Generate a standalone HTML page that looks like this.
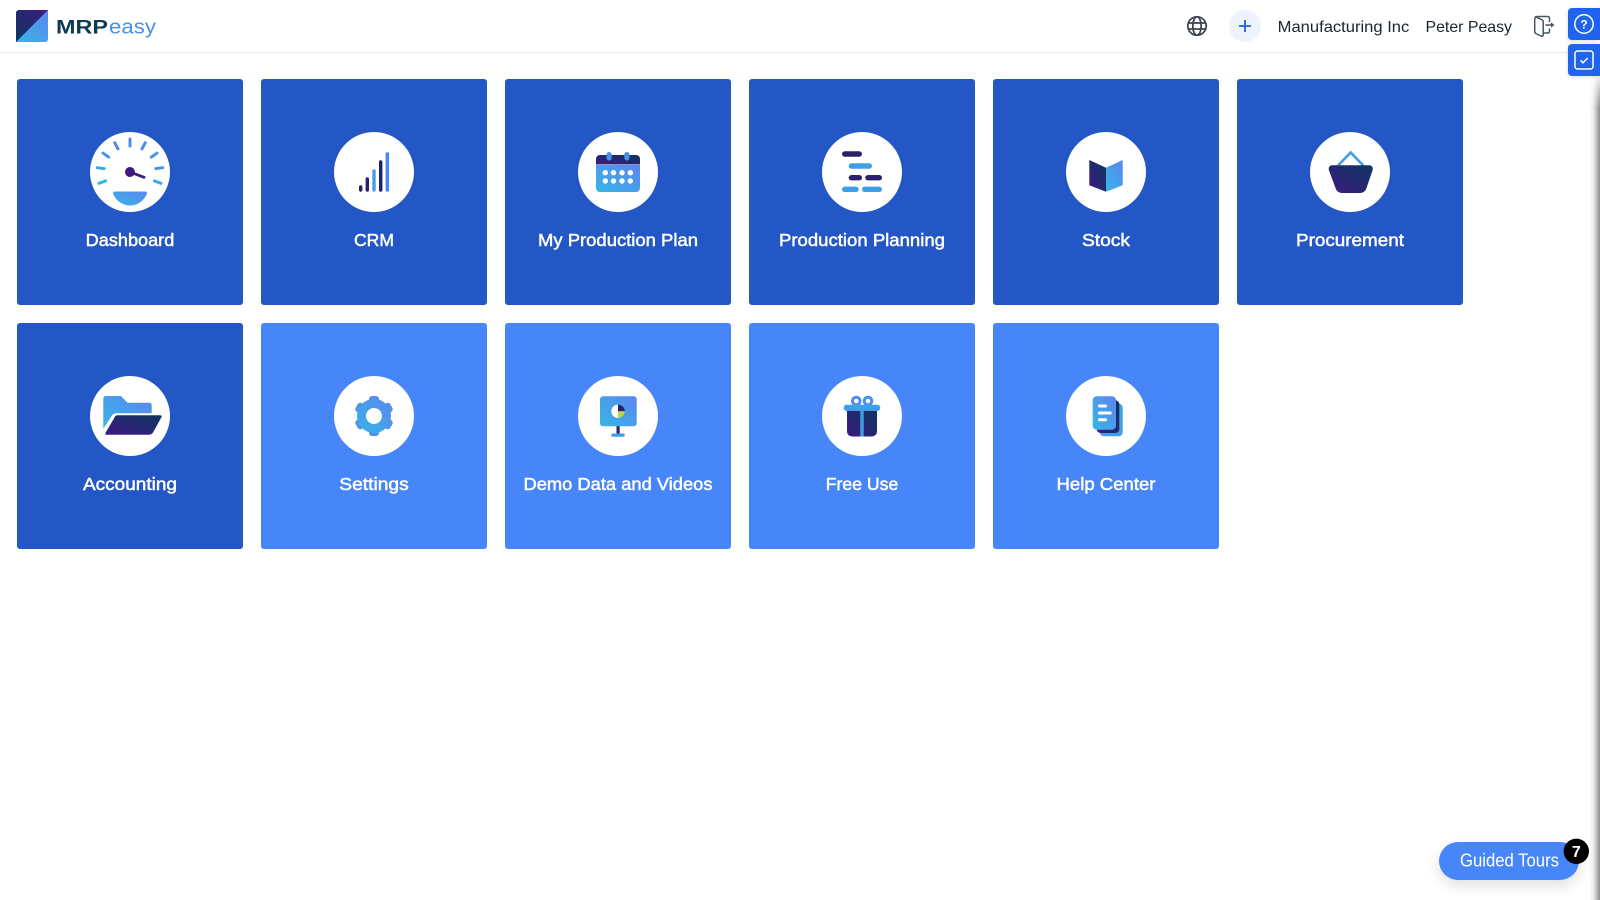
<!DOCTYPE html>
<html lang="en">
<head>
<meta charset="utf-8">
<title>MRPeasy</title>
<style>
html,body{margin:0;padding:0;width:1600px;height:900px;overflow:hidden;background:#fff;font-family:"Liberation Sans",sans-serif}
.hdr{position:absolute;left:0;top:0;width:1600px;height:52px;border-bottom:1px solid #e9e9f1;background:#fff}
.tile{position:absolute;width:226px;height:226px;border-radius:3px}
.d{background:#2257c5}
.l{background:#4686f8}
.tile svg{position:absolute;left:0;top:0;width:226px;height:226px}
.tile text{font-family:"Liberation Sans",sans-serif;font-size:17.5px;fill:#fff;stroke:#fff;stroke-width:.5px;text-anchor:middle}
.edge{position:absolute;left:1589px;top:72px;width:11px;height:828px;background:linear-gradient(to right,rgba(120,120,120,0),rgba(120,120,120,.14) 40%,rgba(110,110,110,.8));-webkit-mask-image:linear-gradient(to bottom,transparent,#000 36px);mask-image:linear-gradient(to bottom,transparent,#000 36px)}
.side{position:absolute;left:1568px;width:32px;height:32px;background:#1f63ee;border-radius:4px 0 0 4px;box-shadow:0 1px 4px rgba(0,0,0,.15)}
.pill{position:absolute;left:1439px;top:842px;width:140px;height:38px;border-radius:19px;background:#4686f8;box-shadow:0 6px 14px rgba(0,0,0,.12)}
.top,.over{position:absolute;left:0;top:0}
</style>
</head>
<body>
<svg width="0" height="0" style="position:absolute">
<defs>
<linearGradient id="g1" x1="0" y1="1" x2="1" y2="0"><stop offset="0" stop-color="#35b6e4"/><stop offset="1" stop-color="#5c85f1"/></linearGradient>
<linearGradient id="g2" x1="0" y1="1" x2="1" y2="0"><stop offset="0" stop-color="#3d1a80"/><stop offset="1" stop-color="#0d3660"/></linearGradient>
<linearGradient id="g3" gradientUnits="userSpaceOnUse" x1="24" y1="60" x2="56" y2="20"><stop offset="0" stop-color="#35b6e4"/><stop offset="1" stop-color="#5c85f1"/></linearGradient>
<linearGradient id="logoD" x1="0" y1="1" x2="1" y2="0"><stop offset="0" stop-color="#0d3660"/><stop offset="1" stop-color="#3d1a80"/></linearGradient>
</defs>
</svg>

<div class="hdr"></div>

<!-- Header -->
<svg class="top" width="1600" height="52" viewBox="0 0 1600 52">
  <path d="M16 13a3 3 0 0 1 3-3h29v29a3 3 0 0 1-3 3H16z" fill="url(#g1)"/>
  <path d="M16 42V13a3 3 0 0 1 3-3h29z" fill="url(#logoD)"/>
  <text x="56" y="33.3" font-family="Liberation Sans" font-weight="700" font-size="19" fill="#0e3a57" textLength="52" lengthAdjust="spacingAndGlyphs">MRP</text>
  <text x="109" y="33.3" font-family="Liberation Sans" font-size="20.5" fill="#4a90e8" textLength="47" lengthAdjust="spacingAndGlyphs">easy</text>

  <g fill="none" stroke="#3a4350" stroke-width="1.7">
    <circle cx="1197" cy="26" r="9.2"/>
    <ellipse cx="1197" cy="26" rx="4.2" ry="9.2"/>
    <path d="M1188.3 23h17.4M1188.3 29h17.4"/>
  </g>
  <circle cx="1245" cy="26" r="16" fill="#eef3fe"/>
  <path d="M1239 26h12M1245 20v12" stroke="#1f5fe0" stroke-width="1.8" fill="none"/>

  <text x="1277.7" y="32.2" font-family="Liberation Sans" font-size="16" fill="#1a2433" textLength="131.6" lengthAdjust="spacingAndGlyphs">Manufacturing Inc</text>
  <text x="1425.5" y="32.2" font-family="Liberation Sans" font-size="16" fill="#1a2433" textLength="86.5" lengthAdjust="spacingAndGlyphs">Peter Peasy</text>

  <g fill="none" stroke="#4a5563" stroke-width="1.5" stroke-linejoin="round" stroke-linecap="round">
    <path d="M1549.500 21.500V18.500q0-2-2-2H1537.500q-2.800 0-2.800 3V31.500q0 1.300 1.200 2l5 2.500q2.300 1 2.300-1.500V21.800q0-1.300-1.200-2l-6.500-3"/>
    <path d="M1544 33h3.500q2 0 2-2v-2"/>
    <path d="M1546 25h6.500"/>
  </g>
  <path d="M1551 22.200l3.400 2.800-3.400 2.800z" fill="#4a5563"/>
</svg>

<!-- Row 1 -->
<div class="tile d" style="left:17px;top:79px"><svg viewBox="0 0 226 226">
  <circle cx="113" cy="93" r="40" fill="#fff"/>
  <g transform="translate(73 53)">
    <g stroke-width="3" stroke-linecap="round" fill="none">
      <path d="M40 7v7" stroke="#4a8df0"/>
      <path d="M40 7v7" stroke="#4a8df0" transform="rotate(-27.500 40 40)"/>
      <path d="M40 7v7" stroke="#4a8df0" transform="rotate(27.500 40 40)"/>
      <path d="M40 7v7" stroke="#4597ec" transform="rotate(-55 40 40)"/>
      <path d="M40 7v7" stroke="#4597ec" transform="rotate(55 40 40)"/>
      <path d="M40 7v7" stroke="#3ea9e8" transform="rotate(-82.500 40 40)"/>
      <path d="M40 7v7" stroke="#4597ec" transform="rotate(82.500 40 40)"/>
      <path d="M40 7v7" stroke="#38b3e5" transform="rotate(-110 40 40)"/>
      <path d="M40 7v7" stroke="#3ea9e8" transform="rotate(110 40 40)"/>
    </g>
    <circle cx="40" cy="40" r="5" fill="#3d1a80"/>
    <path d="M40 40L54 45.300" stroke="#3d1a80" stroke-width="2.800" stroke-linecap="round"/>
    <path d="M25 59.500H55Q57.500 59.500 56.800 62C54 69 47 73.500 40 73.500C33 73.500 26 69 23.200 62Q22.500 59.500 25 59.500Z" fill="url(#g1)"/>
  </g>
  <text x="113" y="167" textLength="88.600" lengthAdjust="spacingAndGlyphs">Dashboard</text>
</svg></div>

<div class="tile d" style="left:261px;top:79px"><svg viewBox="0 0 226 226">
  <circle cx="113" cy="93" r="40" fill="#fff"/>
  <g transform="translate(73 53)" stroke-width="3.400" stroke-linecap="round" fill="none">
    <path d="M26.700 55V58" stroke="#2d1f6e"/>
    <path d="M33.300 47V58" stroke="#2d1f6e"/>
    <path d="M40 39V58" stroke="#4a9be8"/>
    <path d="M46.700 30V58" stroke="#1f2068"/>
    <path d="M53.300 22V58" stroke="#4a87ef"/>
  </g>
  <text x="113" y="167" textLength="40" lengthAdjust="spacingAndGlyphs">CRM</text>
</svg></div>

<div class="tile d" style="left:505px;top:79px"><svg viewBox="0 0 226 226">
  <circle cx="113" cy="93" r="40" fill="#fff"/>
  <g transform="translate(73 53)">
    <path d="M18 33H62V56a4 4 0 0 1-4 4H22a4 4 0 0 1-4-4z" fill="url(#g1)"/>
    <path d="M18 32.500V27a4 4 0 0 1 4-4H58a4 4 0 0 1 4 4V32.500z" fill="url(#g2)"/>
    <rect x="28.500" y="20" width="5.200" height="8.500" rx="2.600" fill="#4a90e8"/>
    <rect x="46.300" y="20" width="5.200" height="8.500" rx="2.600" fill="#4a90e8"/>
    <g fill="#fff">
      <circle cx="27.300" cy="40.700" r="2.700"/><circle cx="35.500" cy="40.700" r="2.700"/><circle cx="44" cy="40.700" r="2.700"/><circle cx="52.300" cy="40.700" r="2.700"/>
      <circle cx="27.300" cy="49" r="2.700"/><circle cx="35.500" cy="49" r="2.700"/><circle cx="44" cy="49" r="2.700"/><circle cx="52.300" cy="49" r="2.700"/>
    </g>
  </g>
  <text x="113" y="167" textLength="160" lengthAdjust="spacingAndGlyphs">My Production Plan</text>
</svg></div>

<div class="tile d" style="left:749px;top:79px"><svg viewBox="0 0 226 226">
  <circle cx="113" cy="93" r="40" fill="#fff"/>
  <g transform="translate(73 53)">
    <rect x="20" y="19.300" width="20" height="5.400" rx="2.700" fill="#2d1f6e"/>
    <rect x="26.700" y="31.300" width="23.300" height="5.400" rx="2.700" fill="#3f9fe6"/>
    <rect x="26.700" y="43" width="13.300" height="5.400" rx="2.700" fill="#2d1f6e"/>
    <rect x="43.300" y="43" width="16.700" height="5.400" rx="2.700" fill="#2d1f6e"/>
    <rect x="20" y="54.600" width="16.700" height="5.400" rx="2.700" fill="#3f9fe6"/>
    <rect x="40" y="54.600" width="20" height="5.400" rx="2.700" fill="#3f9fe6"/>
  </g>
  <text x="113" y="167" textLength="166" lengthAdjust="spacingAndGlyphs">Production Planning</text>
</svg></div>

<div class="tile d" style="left:993px;top:79px"><svg viewBox="0 0 226 226">
  <circle cx="113" cy="93" r="40" fill="#fff"/>
  <g transform="translate(73 53)">
    <path d="M23.300 28L40 35.700V59.700L23.300 53.300Z" fill="url(#g2)"/>
    <path d="M40 35.700L56.700 28V53.300L40 59.700Z" fill="url(#g1)"/>
  </g>
  <text x="113" y="167" textLength="48" lengthAdjust="spacingAndGlyphs">Stock</text>
</svg></div>

<div class="tile d" style="left:1237px;top:79px"><svg viewBox="0 0 226 226">
  <circle cx="113" cy="93" r="40" fill="#fff"/>
  <g transform="translate(73 53)">
    <path d="M28 33.500L40.700 20.500L53.300 33.500" fill="none" stroke="#3f9fe6" stroke-width="2.600"/>
    <path d="M22 33.300H59.500a3.500 3.500 0 0 1 3.200 4.600L56.500 56a7 7 0 0 1-6 5H31.500a7 7 0 0 1-6-5L18.800 37.900a3.500 3.500 0 0 1 3.200-4.600Z" fill="url(#g2)"/>
  </g>
  <text x="113" y="167" textLength="108" lengthAdjust="spacingAndGlyphs">Procurement</text>
</svg></div>

<!-- Row 2 -->
<div class="tile d" style="left:17px;top:323px"><svg viewBox="0 0 226 226">
  <circle cx="113" cy="93" r="40" fill="#fff"/>
  <g transform="translate(73 53)">
    <path d="M16 20H31L37.500 26.700H59Q61.700 26.700 61.700 29.500V37.300H26Q23.500 37.300 22 39.500L13.300 52.700V23Q13.300 20 16 20Z" fill="url(#g1)"/>
    <path d="M27.500 39.300H70Q72.500 39.300 71.300 41.500L63 56.500Q61.600 58.700 59 58.700H17Q14.500 58.700 15.700 56.500L24.500 41.500Q25.500 39.300 27.500 39.300Z" fill="url(#g2)"/>
  </g>
  <text x="113" y="167" textLength="94" lengthAdjust="spacingAndGlyphs">Accounting</text>
</svg></div>

<div class="tile l" style="left:261px;top:323px"><svg viewBox="0 0 226 226">
  <circle cx="113" cy="93" r="40" fill="#fff"/>
  <g transform="translate(73 53)">
    <g fill="url(#g3)">
      <rect x="35" y="20" width="10" height="10" rx="3"/>
      <rect x="35" y="20" width="10" height="10" rx="3" transform="rotate(60 40 40)"/>
      <rect x="35" y="20" width="10" height="10" rx="3" transform="rotate(120 40 40)"/>
      <rect x="35" y="20" width="10" height="10" rx="3" transform="rotate(180 40 40)"/>
      <rect x="35" y="20" width="10" height="10" rx="3" transform="rotate(240 40 40)"/>
      <rect x="35" y="20" width="10" height="10" rx="3" transform="rotate(300 40 40)"/>
    </g>
    <circle cx="40" cy="40" r="12.500" fill="none" stroke="url(#g3)" stroke-width="9"/>
  </g>
  <text x="113" y="167" textLength="69.400" lengthAdjust="spacingAndGlyphs">Settings</text>
</svg></div>

<div class="tile l" style="left:505px;top:323px"><svg viewBox="0 0 226 226">
  <circle cx="113" cy="93" r="40" fill="#fff"/>
  <g transform="translate(73 53)">
    <rect x="38.500" y="50" width="3.200" height="8" fill="#2d1f6e"/>
    <rect x="33.300" y="57.500" width="13.400" height="3.200" rx="1.600" fill="#3f9fe6"/>
    <rect x="22" y="20.300" width="36.700" height="30" rx="3" fill="url(#g1)"/>
    <path d="M40 28.600a6.700 6.700 0 0 0 0 13.400Z" fill="#fff"/>
    <path d="M40 28.600a6.700 6.700 0 0 1 6.700 6.700H40Z" fill="#2d1f6e"/>
    <path d="M40 35.300h6.700a6.700 6.700 0 0 1-6.700 6.700Z" fill="#b5d84a"/>
  </g>
  <text x="113" y="167" textLength="189" lengthAdjust="spacingAndGlyphs">Demo Data and Videos</text>
</svg></div>

<div class="tile l" style="left:749px;top:323px"><svg viewBox="0 0 226 226">
  <circle cx="113" cy="93" r="40" fill="#fff"/>
  <g transform="translate(73 53)">
    <path d="M25 34H55V55.500a5 5 0 0 1-5 5H30a5 5 0 0 1-5-5Z" fill="url(#g2)"/>
    <rect x="38.300" y="34" width="3.400" height="26.500" fill="#3f9fe6"/>
    <circle cx="34.300" cy="25" r="3.800" fill="none" stroke="#4a90e8" stroke-width="3"/>
    <circle cx="46" cy="25" r="3.800" fill="none" stroke="#4a90e8" stroke-width="3"/>
    <rect x="21.700" y="28.700" width="36.600" height="6.300" rx="3.100" fill="#3f9fe6"/>
  </g>
  <text x="113" y="167" textLength="72.500" lengthAdjust="spacingAndGlyphs">Free Use</text>
</svg></div>

<div class="tile l" style="left:993px;top:323px"><svg viewBox="0 0 226 226">
  <circle cx="113" cy="93" r="40" fill="#fff"/>
  <g transform="translate(73 53)">
    <rect x="34" y="27.700" width="22.700" height="32.600" rx="4" fill="#3f9fe6"/>
    <rect x="30.700" y="24.300" width="22.600" height="32.700" rx="4" fill="url(#g2)"/>
    <rect x="26.700" y="20.300" width="23.300" height="33.400" rx="4" fill="url(#g1)"/>
    <rect x="32" y="28.500" width="9" height="3" rx="1.500" fill="#fff"/>
    <rect x="32" y="35.500" width="13.700" height="3" rx="1.500" fill="#fff"/>
    <rect x="32" y="42.200" width="9" height="3" rx="1.500" fill="#fff"/>
  </g>
  <text x="113" y="167" textLength="99" lengthAdjust="spacingAndGlyphs">Help Center</text>
</svg></div>

<div class="edge"></div>

<div class="side" style="top:8px"></div>
<div class="side" style="top:44px"></div>

<div class="pill"></div>

<svg class="over" width="1600" height="900" viewBox="0 0 1600 900">
  <circle cx="1584" cy="24" r="9.200" fill="none" stroke="#fff" stroke-width="1.500"/>
  <text x="1584" y="28.300" text-anchor="middle" font-family="Liberation Sans" font-weight="700" font-size="12" fill="#fff">?</text>
  <rect x="1575" y="51" width="18" height="18" rx="2.500" fill="none" stroke="#fff" stroke-width="1.500"/>
  <path d="M1580.500 60.300l2.500 2.500 4.800-4.800" fill="none" stroke="#fff" stroke-width="1.500"/>
  <text x="1460" y="866.500" font-family="Liberation Sans" font-size="18" fill="#fff" textLength="99" lengthAdjust="spacingAndGlyphs">Guided Tours</text>
  <circle cx="1576.300" cy="851.300" r="12.700" fill="#000"/>
  <text x="1576.300" y="857" text-anchor="middle" font-family="Liberation Sans" font-weight="700" font-size="16" fill="#fff">7</text>
</svg>
</body>
</html>
